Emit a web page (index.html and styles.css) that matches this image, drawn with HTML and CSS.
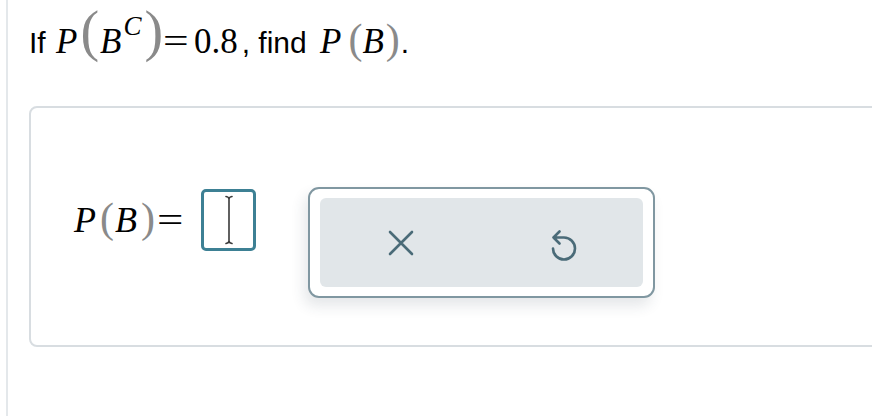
FILE: index.html
```html
<!DOCTYPE html>
<html>
<head>
<meta charset="utf-8">
<link rel="stylesheet" href="styles.css">
</head>
<body>
<div class="page">
  <p class="question"><span class="word">If</span> <span class="m m1"><span class="var">P</span><span class="paren big">(</span><span class="var">B</span><span class="sup">C</span><span class="paren big close">)</span><span class="eq">=</span>0.8</span>, find <span class="m m2"><span class="var">P</span><span class="paren">(</span><span class="var">B</span><span class="paren close">)</span></span>.</p>
  <div class="card">
    <div class="row">
      <div class="answer-math"><span class="var">P</span><span class="paren">(</span><span class="var">B</span><span class="paren close">)</span><span class="eq">=</span></div>
      <div class="input-box">
        <svg class="ibeam" width="10" height="50" viewBox="0 0 10 50"><path d="M2 1.5 Q5 2 5 4 Q5 2 8 1.5 M5 4 V46 M2 48.5 Q5 48 5 46 Q5 48 8 48.5" fill="none" stroke="#3a3a3a" stroke-width="1.6" stroke-linecap="round"/></svg>
      </div>
      <div class="keypad">
        <div class="keys">
          <div class="key"><svg width="26" height="26" viewBox="0 0 26 26"><path d="M2 2 L24 24 M24 2 L2 24" stroke="#4a6b78" stroke-width="2.6" stroke-linecap="round" fill="none"/></svg></div>
          <div class="key"><svg width="28" height="36" viewBox="0 0 28 36"><path d="M15 12.5 A11 11 0 1 1 4 23.5 M15 12.5 H4.5 M10.5 6.5 L4.5 12.5 L10.5 18.5" stroke="#4a6b78" stroke-width="2.6" stroke-linecap="round" stroke-linejoin="round" fill="none"/></svg></div>
        </div>
      </div>
    </div>
  </div>
</div>
</body>
</html>
```
FILE: styles.css
```css
* { box-sizing: border-box; }
body {
  margin: 0;
  background: #fff;
  color: #000;
  font-family: "Liberation Sans", Arial, sans-serif;
}
.page {
  margin-left: 6px;
  border-left: 2px solid #e4e8eb;
  height: 416px;
  padding-left: 21px;
  overflow: hidden;
}
.question {
  margin: 0;
  padding-top: 3px;
  font-size: 30px;
  line-height: 40px;
  white-space: nowrap;
}
.m {
  font-family: "Liberation Serif", "Times New Roman", serif;
  font-size: 35px;
  margin-left: 2px;
}
.m1 { margin-right: 4px; }
.m2 { margin-left: 5px; }
.var { font-style: italic; }
.paren {
  font-family: "Liberation Serif", "Times New Roman", serif;
  font-style: normal;
  color: #8a8a8a;
  font-size: 42px;
  line-height: 1.15;
  margin: 0 0 0 7px;
}
.paren.close { margin: 0 1px 0 2px; }
.paren.big { font-size: 56px; line-height: 1; vertical-align: 3px; margin: 0 1px 0 3px; }
.sup {
  font-style: italic;
  font-size: 27px;
  line-height: 0;
  vertical-align: 18px;
  margin-left: 2px;
}
.eq {
  display: inline-block;
  transform: scaleX(1.3);
  margin: 0 8px 0 2px;
}
.card {
  margin-top: 43px;
  width: 900px;
  height: 241px;
  border: 2px solid #d8dde1;
  border-radius: 8px;
}
.row {
  display: flex;
  align-items: flex-start;
  padding-top: 79px;
  padding-left: 43px;
}
.answer-math {
  margin-top: 15px;
  font-family: "Liberation Serif", "Times New Roman", serif;
  font-size: 36px;
  line-height: 36px;
  white-space: nowrap;
}
.answer-math .paren { margin: 0 1px 0 4px; line-height: 0; }
.answer-math .eq { margin: 0 0 0 4px; }
.input-box {
  margin-left: 21px;
  margin-top: 2px;
  width: 55px;
  height: 62px;
  border: 3px solid #3d8094;
  border-radius: 5px;
  display: flex;
  align-items: center;
  justify-content: center;
}
.keypad {
  margin-left: 52px;
  width: 347px;
  height: 111px;
  border: 2px solid #8097a1;
  border-radius: 11px;
  padding: 9px 10px;
  background: #fff;
  box-shadow: -4px 8px 14px rgba(40, 60, 70, 0.12);
}
.keys {
  height: 100%;
  background: #e1e6e9;
  border-radius: 6px;
  display: grid;
  grid-template-columns: 1fr 1fr;
}
.key {
  display: flex;
  align-items: center;
  justify-content: center;
}
```
